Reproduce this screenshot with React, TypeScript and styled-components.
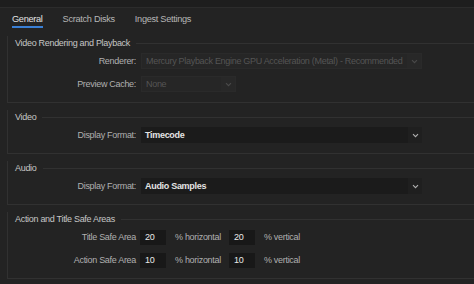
import React from "react";
import styled, { createGlobalStyle } from "styled-components";

const Global = createGlobalStyle`
  html, body { margin: 0; padding: 0; background: #232323; overflow: hidden; }
  body {
    font-family: "Liberation Sans", Arial, sans-serif;
    font-size: 9px;
    letter-spacing: -0.3px;
  }
  * { box-sizing: border-box; }
`;

const Page = styled.div`
  width: 474px;
  height: 284px;
  background: #232323;
  overflow: hidden;
  display: flex;
  flex-direction: column;
`;

const TopStrip = styled.div`
  height: 8px;
  flex: none;
  background: #1e1e1e;
  border-bottom: 1px solid #2c2c2c;
`;

const TabBar = styled.nav`
  height: 28px;
  flex: none;
  display: flex;
  gap: 20px;
  padding: 4px 0 0 12px;
`;

const Tab = styled.div<{ $active?: boolean }>`
  height: 16px;
  line-height: 14px;
  font-size: 9.2px;
  color: ${(p) => (p.$active ? "#e4e4e4" : "#b6b6b6")};
  border-bottom: 2px solid ${(p) => (p.$active ? "#3a7fd5" : "transparent")};
`;

const Content = styled.div`
  display: flex;
  flex-direction: column;
  gap: 7px;
  padding-left: 7px;
`;

const Group = styled.section`
  border-left: 1px solid #313131;
  border-bottom: 1px solid #313131;
  padding-bottom: 10px;
`;

const Legend = styled.div`
  height: 14px;
  display: flex;
  align-items: center;
  padding-left: 7px;
  color: #c6c6c6;
  white-space: nowrap;
  &::after {
    content: "";
    flex: 1;
    height: 1px;
    margin-left: 6px;
    background: #313131;
  }
`;

const Rows = styled.div`
  display: flex;
  flex-direction: column;
  gap: 7px;
  padding-top: 3px;
`;

const Row = styled.div`
  height: 16px;
  display: flex;
  align-items: center;
`;

const Label = styled.div`
  width: 128px;
  flex: none;
  text-align: right;
  color: #b0b0b0;
  white-space: nowrap;
  margin-right: 5px;
`;

const Select = styled.div<{ $width: number; $disabled?: boolean }>`
  width: ${(p) => p.$width}px;
  height: 16px;
  display: flex;
  align-items: center;
  background: ${(p) => (p.$disabled ? "#262626" : "#1b1b1b")};
  border: ${(p) => (p.$disabled ? "1px solid #2a2a2a" : "none")};
  color: ${(p) => (p.$disabled ? "#555555" : "#e4e4e4")};
  font-weight: ${(p) => (p.$disabled ? 400 : 700)};
`;

const SelectText = styled.span`
  flex: 1;
  padding-left: 4px;
  white-space: nowrap;
  overflow: hidden;
`;

const Chevron = styled.span<{ $disabled?: boolean }>`
  width: 14px;
  height: 100%;
  flex: none;
  display: flex;
  align-items: center;
  justify-content: center;
  background: ${(p) => (p.$disabled ? "#282828" : "#1f1f1f")};
  color: ${(p) => (p.$disabled ? "#4a4a4a" : "#b0b0b0")};
`;

const NumInput = styled.div`
  width: 26px;
  height: 15px;
  flex: none;
  display: flex;
  align-items: center;
  padding-left: 5px;
  background: #181818;
  color: #e8e8e8;
  margin-left: -1px;
`;

const Unit = styled.span<{ $gap: number }>`
  color: #b0b0b0;
  margin-left: 9px;
  margin-right: ${(p) => p.$gap}px;
  white-space: nowrap;
`;

const ChevronIcon = () => (
  <svg width="7" height="5" viewBox="0 0 7 5">
    <path d="M1 1.2 L3.5 3.7 L6 1.2" fill="none" stroke="currentColor" strokeWidth="1.1" />
  </svg>
);

const Dropdown = ({ width, value, disabled }: { width: number; value: string; disabled?: boolean }) => (
  <Select $width={width} $disabled={disabled}>
    <SelectText>{value}</SelectText>
    <Chevron $disabled={disabled}>
      <ChevronIcon />
    </Chevron>
  </Select>
);

export default function App() {
  return (
    <Page>
      <Global />
      <TopStrip />
      <TabBar>
        <Tab $active>General</Tab>
        <Tab>Scratch Disks</Tab>
        <Tab>Ingest Settings</Tab>
      </TabBar>
      <Content>
        <Group>
          <Legend>Video Rendering and Playback</Legend>
          <Rows>
            <Row>
              <Label>Renderer:</Label>
              <Dropdown width={281} value="Mercury Playback Engine GPU Acceleration (Metal) - Recommended" disabled />
            </Row>
            <Row>
              <Label>Preview Cache:</Label>
              <Dropdown width={95} value="None" disabled />
            </Row>
          </Rows>
        </Group>
        <Group>
          <Legend>Video</Legend>
          <Rows>
            <Row>
              <Label>Display Format:</Label>
              <Dropdown width={281} value="Timecode" />
            </Row>
          </Rows>
        </Group>
        <Group>
          <Legend>Audio</Legend>
          <Rows>
            <Row>
              <Label>Display Format:</Label>
              <Dropdown width={281} value="Audio Samples" />
            </Row>
          </Rows>
        </Group>
        <Group>
          <Legend>Action and Title Safe Areas</Legend>
          <Rows>
            <Row>
              <Label>Title Safe Area</Label>
              <NumInput>20</NumInput>
              <Unit $gap={9}>% horizontal</Unit>
              <NumInput>20</NumInput>
              <Unit $gap={0}>% vertical</Unit>
            </Row>
            <Row>
              <Label>Action Safe Area</Label>
              <NumInput>10</NumInput>
              <Unit $gap={9}>% horizontal</Unit>
              <NumInput>10</NumInput>
              <Unit $gap={0}>% vertical</Unit>
            </Row>
          </Rows>
        </Group>
      </Content>
    </Page>
  );
}
